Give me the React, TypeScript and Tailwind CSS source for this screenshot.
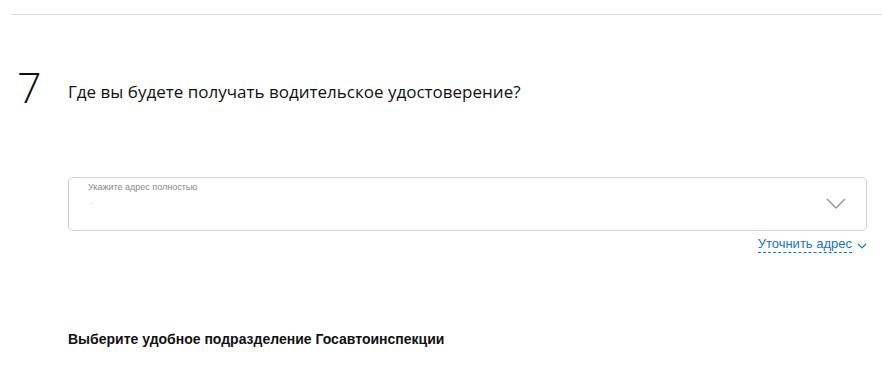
export default function App() {
  return (
    <div className="w-[882px] h-[368px] bg-white overflow-hidden" style={{ fontFamily: 'Arial' }}>
      {/* top rule */}
      <div className="pt-[14px] pl-[11px]">
        <div className="h-px bg-[#d5dee3]" />
      </div>

      {/* question */}
      <div className="flex items-start pl-[17px] pt-[50px]">
        <span className="w-[51px] text-[43px] leading-[43px] font-extralight text-[#111]" style={{ fontFamily: '"Open Sans", sans-serif' }}>
          7
        </span>
        <h2 className="pt-[15px] text-[17px] leading-[24px] text-[#111]" style={{ fontFamily: '"Open Sans", sans-serif' }}>
          Где вы будете получать водительское удостоверение?
        </h2>
      </div>

      {/* address field */}
      <div className="pl-[68px] pr-[15px] pt-[69px]">
        <div className="relative h-[54px] rounded-[5px] border border-[#d3d3d3] pl-[19px] pt-[4px]">
          <div className="text-[9px] leading-[11px] text-[#8a8a8a]" style={{ fontFamily: '"Liberation Sans", Arial, sans-serif' }}>
            Укажите адрес полностью
          </div>
          <div className="pl-[2px] pt-[4px] text-[8px] leading-[8px] text-[#e08a3a]">ˏ</div>
          <svg className="absolute right-[20px] top-[20px]" width="20" height="12" viewBox="0 0 20 12" fill="none">
            <path d="M1 1 L10 10 L19 1" stroke="#999" strokeWidth="1.5" />
          </svg>
        </div>
        <div className="flex justify-end items-center pt-[5px]">
          <span
            className="text-[13px] leading-[16px] text-[#1a73c5] border-b border-dashed border-[#1a73c5]"
            style={{ fontFamily: '"Liberation Sans", Arial, sans-serif' }}
          >
            Уточнить адрес
          </span>
          <svg className="ml-[5px] mt-[2px]" width="10" height="6" viewBox="0 0 10 6" fill="none">
            <path d="M1 1 L5 5 L9 1" stroke="#1a73c5" strokeWidth="1.2" />
          </svg>
        </div>
      </div>

      {/* subtitle */}
      <div className="pl-[68px] pt-[78px]">
        <h3 className="text-[14px] leading-[16px] font-bold text-[#111]" style={{ fontFamily: '"Liberation Sans", Arial, sans-serif' }}>
          Выберите удобное подразделение Госавтоинспекции
        </h3>
      </div>
    </div>
  );
}
